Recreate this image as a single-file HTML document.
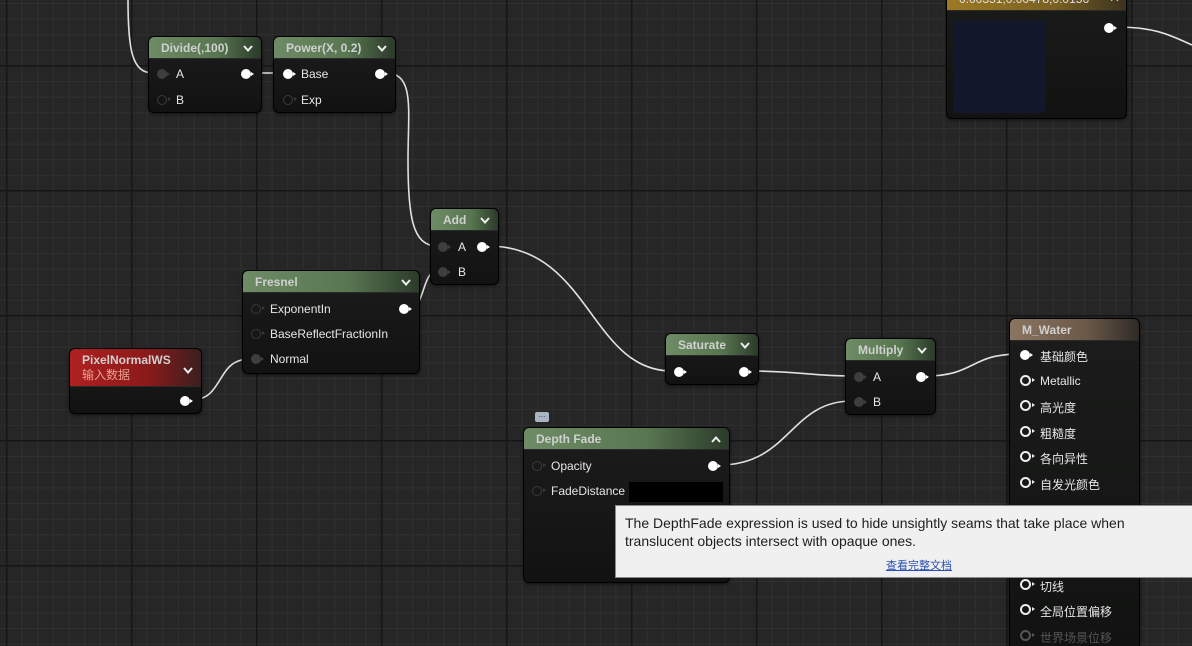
<!DOCTYPE html>
<html><head><meta charset="utf-8"><style>
*{box-sizing:border-box;margin:0;padding:0}
html,body{width:1192px;height:646px;overflow:hidden}
body{position:relative;background-color:#262626;font-family:"Liberation Sans","Noto Sans CJK SC",sans-serif;
background-image:
linear-gradient(to right,#161616 0 1.3px,transparent 1.3px),
linear-gradient(to bottom,#161616 0 1.3px,transparent 1.3px),
linear-gradient(to right,#303030 0 1px,transparent 1px),
linear-gradient(to bottom,#303030 0 1px,transparent 1px);
background-size:125px 125px,125px 125px,15.625px 15.625px,15.625px 15.625px;
background-position:6px 0,0 65px,6px 0,0 3px;}
.node{position:absolute;background:linear-gradient(#1b1c1b,#111211);border:1px solid #000;border-radius:6px;box-shadow:0 1px 3px rgba(0,0,0,.6);color:#e6e6e6;font-size:12px}
.hd{height:22px;border-radius:5px 5px 0 0;background:linear-gradient(to right,#6d8c66,#587650 60%,#2c3a2a);color:#d0d0d0;font-weight:bold;font-size:12px;line-height:22px;padding-left:12px;position:relative;border-bottom:1px solid #2a2a2a}
.ch{position:absolute;right:8px;top:8px;width:10px;height:7px}
.row{position:absolute;height:14px;line-height:14px;font-size:12px;color:#e6e6e6}
.pin{position:absolute;width:10px;height:10px;border-radius:50%}
.pin::after{content:"";position:absolute;right:-4px;top:2.5px;border-left:3px solid;border-top:2.5px solid transparent;border-bottom:2.5px solid transparent}
.w{background:#fff}.w::after{border-left-color:#fff;right:-3px}
.g{background:#3e3e3e}.g::after{border-left-color:#3e3e3e;right:-3px}
.o{border:1.5px solid #3a3a3a}.o::after{border-left-color:#3a3a3a;right:-5px;top:1px}
.r{border:2px solid #eee;width:11px;height:11px}.r::after{border-left-color:#eee;right:-6px;top:1px}
.lbl{position:absolute;font-size:12px;color:#e6e6e6;white-space:nowrap}
</style></head><body>
<svg width="0" height="0" style="position:absolute"><defs><symbol id="cv" viewBox="0 0 10 7"><polyline points="1,1 5,5.5 9,1" fill="none" stroke="#eee" stroke-width="2"/></symbol></defs></svg>
<svg width="1192" height="646" style="position:absolute;left:0;top:0" fill="none" stroke="#e0e0e0" stroke-width="1.6">
<path d="M128,0 C128,50 132,73 153,73"/>
<path d="M250,73 L282,73"/>
<path d="M386,73 C415,73 408,110 408,160 C408,215 412,246 437,246"/>
<path d="M409,309 C425,309 422,271 437,271"/>
<path d="M488,246 C590,246 590,371 672,371"/>
<path d="M749,371 C800,371 810,376 852,376"/>
<path d="M191,400 C225,400 215,359 250,359"/>
<path d="M719,465 C790,465 790,401 852,401"/>
<path d="M926,376 C975,376 970,354 1019,354"/>
<path d="M1116,27 C1155,27 1170,35 1192,45"/>
</svg>

<div class="node" style="left:946px;top:-20px;width:181px;height:139px">
<div class="hd" style="height:30px;background:linear-gradient(to right,#9c7a24,#7a6021 60%,#3b3320);line-height:24px;padding-top:6px;font-weight:normal;color:#e0e0e0">0.00351,0.00478,0.0156<span style="position:absolute;right:6px;top:5px;font-size:13px">✕</span></div>
<div style="position:absolute;left:6px;top:39px;width:93px;height:93px;background:#12172a"></div>
<span class="pin w" style="left:157px;top:42px"></span>
</div>

<div class="node" style="left:148px;top:36px;width:114px;height:77px">
<div class="hd">Divide(,100)<svg class="ch"><use href="#cv"/></svg></div>
<span class="pin g" style="left:8px;top:32px"></span><span class="lbl" style="left:27px;top:30px">A</span>
<span class="pin o" style="left:8px;top:58px"></span><span class="lbl" style="left:27px;top:56px">B</span>
<span class="pin w" style="left:92px;top:32px"></span>
</div>

<div class="node" style="left:273px;top:36px;width:123px;height:77px">
<div class="hd">Power(X, 0.2)<svg class="ch"><use href="#cv"/></svg></div>
<span class="pin w" style="left:9px;top:32px"></span><span class="lbl" style="left:27px;top:30px">Base</span>
<span class="pin o" style="left:9px;top:58px"></span><span class="lbl" style="left:27px;top:56px">Exp</span>
<span class="pin w" style="left:101px;top:32px"></span>
</div>

<div class="node" style="left:430px;top:208px;width:69px;height:77px">
<div class="hd">Add<svg class="ch"><use href="#cv"/></svg></div>
<span class="pin g" style="left:7px;top:33px"></span><span class="lbl" style="left:27px;top:31px">A</span>
<span class="pin g" style="left:7px;top:58px"></span><span class="lbl" style="left:27px;top:56px">B</span>
<span class="pin w" style="left:46px;top:33px"></span>
</div>

<div class="node" style="left:242px;top:270px;width:178px;height:104px">
<div class="hd">Fresnel<svg class="ch"><use href="#cv"/></svg></div>
<span class="pin o" style="left:8px;top:33px"></span><span class="lbl" style="left:27px;top:31px">ExponentIn</span>
<span class="pin o" style="left:8px;top:58px"></span><span class="lbl" style="left:27px;top:56px">BaseReflectFractionIn</span>
<span class="pin g" style="left:8px;top:83px"></span><span class="lbl" style="left:27px;top:81px">Normal</span>
<span class="pin w" style="left:156px;top:33px"></span>
</div>

<div class="node" style="left:69px;top:348px;width:133px;height:66px">
<div class="hd" style="height:38px;background:linear-gradient(to right,#b02020,#8a1a1a 60%,#3a1f1f);line-height:15px;padding-top:4px">PixelNormalWS<br><span style="font-weight:normal;color:#e8a090">输入数据</span><svg class="ch" style="top:18px"><use href="#cv"/></svg></div>
<span class="pin w" style="left:110px;top:47px"></span>
</div>

<div class="node" style="left:665px;top:333px;width:94px;height:52px">
<div class="hd">Saturate<svg class="ch"><use href="#cv"/></svg></div>
<span class="pin w" style="left:8px;top:33px"></span>
<span class="pin w" style="left:73px;top:33px"></span>
</div>

<div class="node" style="left:845px;top:338px;width:91px;height:77px">
<div class="hd">Multiply<svg class="ch"><use href="#cv"/></svg></div>
<span class="pin g" style="left:8px;top:33px"></span><span class="lbl" style="left:27px;top:31px">A</span>
<span class="pin g" style="left:8px;top:58px"></span><span class="lbl" style="left:27px;top:56px">B</span>
<span class="pin w" style="left:70px;top:33px"></span>
</div>

<div style="position:absolute;left:535px;top:412px;width:14px;height:10px;background:#a9b4c2;border-radius:2px;font-size:8px;line-height:6px;text-align:center;color:#333">...</div>

<div class="node" style="left:523px;top:427px;width:207px;height:156px">
<div class="hd">Depth Fade<svg class="ch" style="transform:rotate(180deg)"><use href="#cv"/></svg></div>
<span class="pin o" style="left:8px;top:33px"></span><span class="lbl" style="left:27px;top:31px">Opacity</span>
<span class="pin o" style="left:8px;top:58px"></span><span class="lbl" style="left:27px;top:56px">FadeDistance</span>
<div style="position:absolute;left:105px;top:54px;width:94px;height:20px;background:#000"></div>
<span class="pin w" style="left:184px;top:33px"></span>
</div>

<div class="node" style="left:1009px;top:318px;width:131px;height:340px">
<div class="hd" style="background:linear-gradient(to right,#8a7560,#6a5848 60%,#2f2a26)">M_Water</div>
<span class="pin w" style="left:10px;top:31px"></span><span class="lbl" style="left:30px;top:29px">基础颜色</span>
<span class="pin r" style="left:10px;top:56px"></span><span class="lbl" style="left:30px;top:55px">Metallic</span>
<span class="pin r" style="left:10px;top:81px"></span><span class="lbl" style="left:30px;top:80px">高光度</span>
<span class="pin r" style="left:10px;top:107px"></span><span class="lbl" style="left:30px;top:106px">粗糙度</span>
<span class="pin r" style="left:10px;top:132px"></span><span class="lbl" style="left:30px;top:131px">各向异性</span>
<span class="pin r" style="left:10px;top:158px"></span><span class="lbl" style="left:30px;top:157px">自发光颜色</span>
<span class="pin r" style="left:10px;top:260px"></span><span class="lbl" style="left:30px;top:259px">切线</span>
<span class="pin r" style="left:10px;top:285px"></span><span class="lbl" style="left:30px;top:284px">全局位置偏移</span>
<span class="pin r" style="left:10px;top:311px;opacity:.3"></span><span class="lbl" style="left:30px;top:310px;opacity:.3">世界场景位移</span>
</div>

<div style="position:absolute;left:615px;top:505px;width:580px;height:73px;background:#f0f0f0;border:1px solid #8a8a8a;color:#1e1e1e;font-size:14px;line-height:18px;padding:8px 0 0 9px">
The DepthFade expression is used to hide unsightly seams that take place when<br>translucent objects intersect with opaque ones.
<div style="position:absolute;left:270px;top:51px;font-size:11px;color:#2a4fb0;text-decoration:underline">查看完整文档</div>
</div>
</body></html>
